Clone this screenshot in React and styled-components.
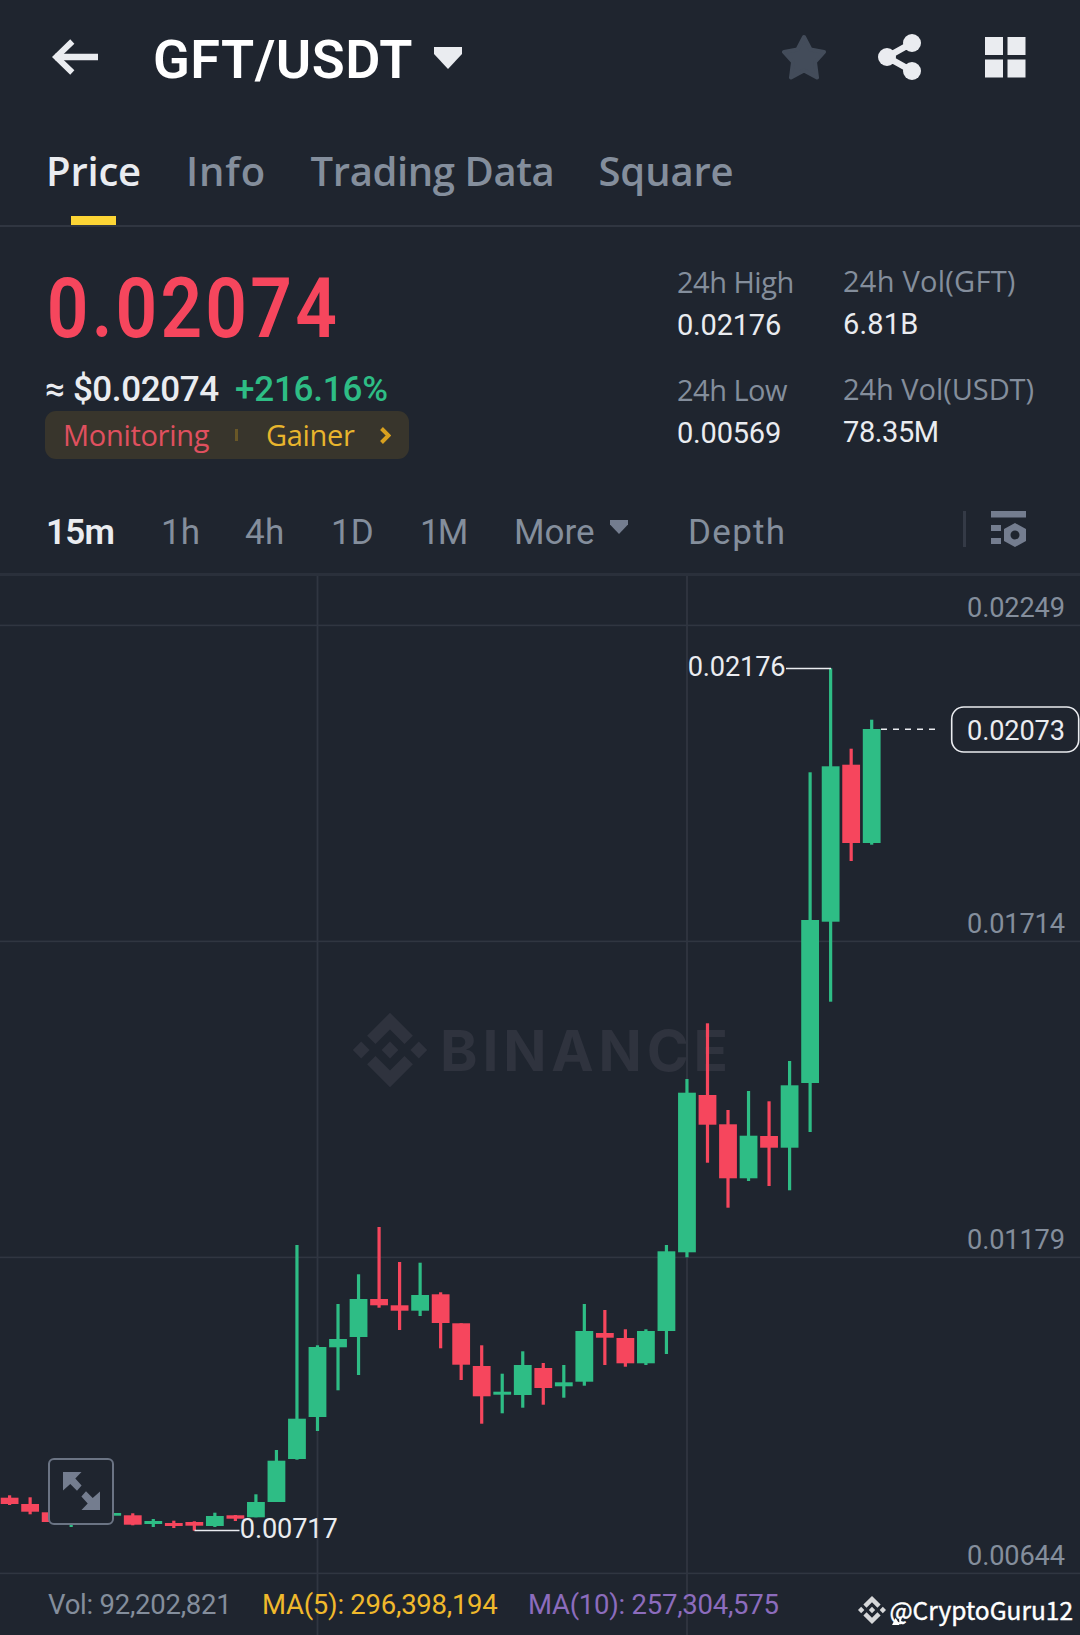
import React from "react";
import styled, { createGlobalStyle } from "styled-components";

const c = {
  bg: "#1f252f",
  line: "#303641",
  white: "#eaecf0",
  muted: "#848e9c",
  icon: "#747d8f",
  green: "#2ebd85",
  red: "#f6465d",
  gold: "#f0b92c",
  purple: "#8c6cbd",
};

const GlobalStyle = createGlobalStyle`
  body { margin: 0; background: ${c.bg}; }
  * { box-sizing: border-box; }
  svg { display: block; flex: none; }
`;

const Screen = styled.main`
  width: 1080px;
  height: 1635px;
  overflow: hidden;
  display: flex;
  flex-direction: column;
  background: ${c.bg};
  color: ${c.white};
  font-family: Roboto, "Liberation Sans", sans-serif;
  white-space: nowrap;
`;

const Header = styled.header`
  height: 114px;
  display: flex;
  align-items: center;
  padding: 0 54px 0 52px;
`;
const Pair = styled.h1`
  margin: 0 0 0 54px;
  padding-top: 5px;
  width: 265px;
  font-size: 54px;
  line-height: 64px;
  font-weight: 600;
  letter-spacing: 0.5px;
  color: #fff;
`;
const Caret = styled.svg`
  margin-left: 16px;
  margin-top: 2px;
`;
const Actions = styled.div`
  margin-left: auto;
  display: flex;
  align-items: center;
`;
const ShareSlot = styled.div`
  margin: 0 64px 0 51px;
`;

const Tabs = styled.nav`
  height: 113px;
  padding: 33px 0 0 46px;
  display: flex;
  gap: 44px;
  border-bottom: 2px solid ${c.line};
  font-family: "Open Sans", sans-serif;
`;
const Tab = styled.div`
  width: ${(p) => p.$w}px;
  display: flex;
  flex-direction: column;
  align-items: center;
  justify-content: space-between;
  font-size: 40px;
  line-height: 48px;
  font-weight: 600;
  letter-spacing: ${(p) => p.$ls}px;
  color: ${(p) => (p.$active ? c.white : c.muted)};
`;
const Indicator = styled.i`
  width: 45px;
  height: 9px;
  background: #fcd535;
`;

const Ticker = styled.section`
  height: 257px;
  padding: 40px 0 0 45px;
  display: flex;
`;
const Quote = styled.div`
  width: 632px;
`;
const LastPrice = styled.div`
  padding-left: 2px;
  font-size: 83px;
  line-height: 84px;
  font-weight: 600;
  letter-spacing: 3.6px;
  transform: scaleX(0.88);
  transform-origin: left;
  color: ${c.red};
`;
const Approx = styled.div`
  margin-top: 17px;
  display: flex;
  font-size: 35px;
  line-height: 43px;
  font-weight: 500;
`;
const Fiat = styled.span`
  width: 190px;
  letter-spacing: -0.4px;
`;
const Change = styled.span`
  color: ${c.green};
  letter-spacing: -0.2px;
`;
const Tag = styled.div`
  width: 364px;
  height: 48px;
  padding: 0 18px;
  display: flex;
  align-items: center;
  border-radius: 11px;
  background: #38352c;
  font: 400 29px/40px "Open Sans", sans-serif;
`;
const TagText = styled.span`
  width: ${(p) => p.$w}px;
  letter-spacing: -0.3px;
  color: ${(p) => p.$color};
`;
const TagDivider = styled.i`
  width: 3px;
  height: 12px;
  margin: 0 28px 0 26px;
  background: #695727;
`;

const Stats = styled.div`
  display: flex;
  margin-top: -5px;
`;
const StatColumn = styled.div`
  width: 166px;
  display: flex;
  flex-direction: column;
  gap: 25px;
  margin-top: ${(p) => (p.$raised ? -1 : 0)}px;
`;
const StatLabel = styled.div`
  font: 400 29px/40px "Open Sans", sans-serif;
  letter-spacing: ${(p) => p.$ls}px;
  color: ${c.muted};
`;
const StatValue = styled.div`
  margin-top: 3px;
  font-size: 29px;
  line-height: 40px;
  letter-spacing: ${(p) => p.$ls}px;
`;

const Periods = styled.nav`
  height: 89px;
  display: flex;
  align-items: center;
  padding-left: 46px;
  font-size: 35px;
  line-height: 44px;
`;
const Period = styled.span`
  width: ${(p) => p.$w}px;
  padding-top: 8px;
  display: flex;
  font-weight: ${(p) => (p.$active ? 600 : 400)};
  letter-spacing: ${(p) => p.$ls}px;
  color: ${(p) => (p.$active ? c.white : c.muted)};
`;
const DepthPeriod = styled(Period)`
  padding-left: 60px;
`;
const SmallCaret = styled.svg`
  margin: 9px 0 0 auto;
`;
const Separator = styled.i`
  width: 3px;
  height: 36px;
  margin-right: 25px;
  background: #343a46;
`;

const ChartPanel = styled.section`
  position: relative;
  height: 1062px;
  border-top: 3px solid #2a303b;
`;
const Expand = styled.button`
  position: absolute;
  left: 48px;
  top: 882px;
  width: 66px;
  height: 67px;
  padding: 0 0 1px 0;
  display: grid;
  place-items: center;
  border: 2px solid #6b7484;
  border-radius: 6px;
  background: ${c.bg};
`;
const Legend = styled.div`
  position: absolute;
  left: 48px;
  bottom: 13px;
  display: flex;
  font-size: 27.5px;
  line-height: 34px;
`;
const LegendItem = styled.span`
  width: ${(p) => p.$w}px;
  letter-spacing: -0.25px;
  color: ${(p) => p.$color};
`;
const Author = styled.div`
  position: absolute;
  right: 7px;
  bottom: 7px;
  display: flex;
  align-items: center;
  gap: 3px;
  color: #fff;
  font: 400 24.5px/36px "Noto Sans CJK SC", sans-serif;
  -webkit-text-stroke: 0.4px #fff;
`;
const Speck = styled.svg`
  position: absolute;
  left: 34px;
  bottom: 3px;
`;

/* direction, body top, body bottom, wick top, wick bottom (page pixels) */
const candles = [
  ["d", 1497.7, 1504, 1495.3, 1505],
  ["d", 1504, 1511.7, 1497.3, 1514.3],
  ["d", 1512.3, 1522, 1512.3, 1522],
  ["u", 1514, 1522, 1512, 1527],
  ["d", 1513, 1519, 1512, 1520],
  ["u", 1513, 1515.7, 1512.5, 1516],
  ["d", 1515.3, 1524.7, 1513.3, 1525.3],
  ["u", 1521, 1524, 1519, 1527],
  ["d", 1523, 1526, 1520.7, 1528],
  ["d", 1522, 1525.7, 1521.3, 1530.7],
  ["u", 1516, 1526, 1512.7, 1527],
  ["d", 1515.3, 1518.7, 1515, 1521],
  ["u", 1502, 1517.3, 1494.3, 1517.3],
  ["u", 1460.7, 1502, 1450, 1502],
  ["u", 1418.7, 1459, 1245, 1459.7],
  ["u", 1347, 1417, 1345.3, 1431],
  ["u", 1339, 1347.3, 1304, 1390.3],
  ["u", 1299, 1337, 1274.3, 1375],
  ["d", 1299, 1305.3, 1227, 1307.7],
  ["d", 1305.3, 1310.7, 1262, 1330],
  ["u", 1295, 1310.7, 1262.7, 1316],
  ["d", 1294.3, 1323, 1292.3, 1348.3],
  ["d", 1323.3, 1364.7, 1323.3, 1380],
  ["d", 1366, 1396.3, 1345.3, 1423.7],
  ["u", 1391.7, 1394.7, 1373.7, 1413.3],
  ["u", 1365, 1395, 1351.3, 1407.7],
  ["d", 1368, 1388, 1363, 1404.7],
  ["u", 1382.3, 1386.3, 1365, 1397.7],
  ["u", 1331, 1381.7, 1304, 1385.7],
  ["d", 1333, 1337.7, 1310, 1365],
  ["d", 1338, 1363.3, 1329.3, 1366.7],
  ["u", 1331, 1363.3, 1329.3, 1365],
  ["u", 1251.3, 1331, 1245, 1354],
  ["u", 1092.7, 1252.3, 1079, 1257.3],
  ["d", 1095, 1124.7, 1023.3, 1162.7],
  ["d", 1124.3, 1178.3, 1110, 1207.7],
  ["u", 1135.7, 1178.3, 1091, 1181],
  ["d", 1136, 1147.7, 1101.3, 1186],
  ["u", 1085.3, 1147.7, 1061, 1190.3],
  ["u", 920, 1083, 772.3, 1132],
  ["u", 766.3, 921.7, 668.3, 1001.7],
  ["d", 764.7, 843, 748.7, 861],
  ["u", 729, 843, 719.7, 844.7],
];

const levels = [
  ["0.02249", 625.4],
  ["0.01714", 941.4],
  ["0.01179", 1257.4],
  ["0.00644", 1573.4],
];

const axisText = { fontFamily: "Roboto, sans-serif", fontSize: 27.2, letterSpacing: -0.15 };

/* Five-part diamond mark on a 74.4-unit square */
function DiamondMark({ size, color, ...rest }) {
  return (
    <svg width={size} height={size} viewBox="0 0 74.4 74.4" fill={color} {...rest}>
      <path d="M37.2 0 60.1 22.9 51.7 31.3 37.2 16.8 22.7 31.3 14.3 22.9z" />
      <path d="M37.2 74.4 60.1 51.5 51.7 43.1 37.2 57.6 22.7 43.1 14.3 51.5z" />
      <path d="M8.4 28.8 16.8 37.2 8.4 45.6 0 37.2z" />
      <path d="M66 28.8 74.4 37.2 66 45.6 57.6 37.2z" />
      <path d="M37.2 28.8 45.6 37.2 37.2 45.6 28.8 37.2z" />
    </svg>
  );
}

function CandleChart() {
  return (
    <svg width="1080" height="1059" viewBox="0 576 1080 1059">
      {levels.map(([label, y]) => (
        <rect key={label} x="0" y={y - 0.8} width="1080" height="1.6" fill={c.line} />
      ))}
      <DiamondMark size={74.4} color="#2f333e" x="352.8" y="1012.8" />
      <text x="440" y="1070.6" fill="#2f333e" fontFamily="Inter, sans-serif" fontWeight="700" fontSize="56.8" textLength="288" lengthAdjust="spacing">
        BINANCE
      </text>
      <rect x="316.6" y="576" width="1.8" height="1059" fill={c.line} />
      <rect x="686.1" y="576" width="1.8" height="1059" fill={c.line} />
      {candles.map(([dir, top, bottom, high, low], i) => {
        const x = 9.6 + i * 20.526;
        return (
          <g key={i} fill={dir === "u" ? c.green : c.red}>
            <rect x={x - 1.6} y={high} width="3.2" height={low - high} />
            <rect x={x - 8.9} y={top} width="17.8" height={bottom - top} />
          </g>
        );
      })}
      {levels.map(([label, y]) => (
        <text key={label} x="967" y={y - 8.7} fill={c.muted} {...axisText}>
          {label}
        </text>
      ))}
      <g stroke={c.white} fill="none">
        <path d="M786 668.5H831" strokeWidth="1.6" />
        <path d="M194.5 1530.5H239.5" strokeWidth="1.6" />
        <path d="M881 729.3H936" strokeWidth="1.5" strokeDasharray="6 6" />
        <rect x="951.7" y="707" width="127" height="45" rx="12" strokeWidth="1.6" fill={c.bg} />
      </g>
      <g fill={c.white} {...axisText}>
        <text x="687.7" y="675.9">0.02176</text>
        <text x="239.8" y="1538">0.00717</text>
        <text x="967" y="740">0.02073</text>
      </g>
    </svg>
  );
}

const tabs = [
  ["Price", 95, -0.2, true],
  ["Info", 82, 0.9],
  ["Trading Data", 243, -0.4],
  ["Square", 136, -0.15],
];

const stats = [
  [["24h High", "0.02176", -0.5, -0.2], ["24h Low", "0.00569", -0.5, -0.2]],
  [["24h Vol(GFT)", "6.81B", 0.25, 0.2], ["24h Vol(USDT)", "78.35M", -0.05, -0.4]],
];

const periods = [
  ["15m", 115, -0.8, true],
  ["1h", 84, 0],
  ["4h", 86, 0.3],
  ["1D", 89, 0],
  ["1M", 94, -1.8],
];

export default function App() {
  return (
    <>
      <GlobalStyle />
      <Screen>
        <Header>
          <svg width="47" height="36" viewBox="0 0 47 36" fill="none" stroke={c.white}>
            <path d="M3 18H46" strokeWidth="6.5" />
            <path d="M20.3 2.5 4.2 18 20.3 33.5" strokeWidth="6" />
          </svg>
          <Pair>GFT/USDT</Pair>
          <Caret width="28" height="22" viewBox="0 0 28 22" fill={c.white}>
            <path d="M0 0H28V7L14 22 0 7z" />
          </Caret>
          <Actions>
            <svg width="46" height="46" viewBox="0 0 46 46" fill="#434c5a" stroke="#434c5a" strokeWidth="4" strokeLinejoin="round">
              <path d="M23 3 29.5 15.5 43 18 34 28 36 43.5 23 36.5 10 43.5 12 28 3 18 16.5 15.5z" />
            </svg>
            <ShareSlot>
              <svg width="43" height="46" viewBox="0 0 43 46" fill={c.white}>
                <path d="M34 9 9 23 34 37" fill="none" stroke={c.white} strokeWidth="6.5" />
                <circle cx="9" cy="23" r="9" />
                <circle cx="34" cy="9" r="9" />
                <circle cx="34" cy="37" r="9" />
              </svg>
            </ShareSlot>
            <svg width="41" height="41" viewBox="0 0 41 41" fill={c.white}>
              <path d="M0 0H18V18H0zM22.5 0H40.5V18H22.5zM0 22.5H18V40.5H0zM22.5 22.5H40.5V40.5H22.5z" />
            </svg>
          </Actions>
        </Header>

        <Tabs>
          {tabs.map(([label, w, ls, active]) => (
            <Tab key={label} $w={w} $ls={ls} $active={active}>
              {label}
              {active && <Indicator />}
            </Tab>
          ))}
        </Tabs>

        <Ticker>
          <Quote>
            <LastPrice>0.02074</LastPrice>
            <Approx>
              <Fiat>≈ $0.02074</Fiat>
              <Change>+216.16%</Change>
            </Approx>
            <Tag>
              <TagText $w={146} $color="#e0505f">Monitoring</TagText>
              <TagDivider />
              <TagText $w={114} $color="#e9b52d">Gainer</TagText>
              <svg width="11" height="17" viewBox="0 0 11 17" fill="none" stroke="#d8a01f" strokeWidth="4">
                <path d="M1.5 1.5 8.5 8.5 1.5 15.5" />
              </svg>
            </Tag>
          </Quote>
          <Stats>
            {stats.map((column, i) => (
              <StatColumn key={i} $raised={i === 1}>
                {column.map(([label, value, labelLs, valueLs]) => (
                  <div key={label}>
                    <StatLabel $ls={labelLs}>{label}</StatLabel>
                    <StatValue $ls={valueLs}>{value}</StatValue>
                  </div>
                ))}
              </StatColumn>
            ))}
          </Stats>
        </Ticker>

        <Periods>
          {periods.map(([label, w, ls, active]) => (
            <Period key={label} $w={w} $ls={ls} $active={active}>
              {label}
            </Period>
          ))}
          <Period $w={114} $ls={0}>
            More
            <SmallCaret width="18" height="14" viewBox="0 0 18 14" fill={c.icon}>
              <path d="M0 0H18V4.5L9 14 0 4.5z" />
            </SmallCaret>
          </Period>
          <DepthPeriod $w={335} $ls={1.3}>Depth</DepthPeriod>
          <Separator />
          <svg width="35" height="36" viewBox="0 0 35 36" fill={c.icon}>
            <path d="M0 0H35V6.5H0zM0 14H10V20H0zM0 27H10V33H0z" />
            <path fillRule="evenodd" d="M24 12 35 18V30L24 36 13 30V18zM24 19.5a4.5 4.5 0 1 0 0 9 4.5 4.5 0 0 0 0-9z" />
          </svg>
        </Periods>

        <ChartPanel>
          <CandleChart />
          <Expand>
            <svg width="37" height="38" viewBox="0 0 37 38" fill={c.icon}>
              <path d="M0 0H18.5L12.3 6.4 18.6 13.6 14 18.8 7.3 12 0 18.6z" />
              <path d="M37 38H18.5L24.7 31.6 18.4 24.4 23 19.2 29.7 26 37 19.4z" />
            </svg>
          </Expand>
          <Legend>
            <LegendItem $w={214} $color={c.muted}>Vol: 92,202,821</LegendItem>
            <LegendItem $w={266} $color={c.gold}>MA(5): 296,398,194</LegendItem>
            <LegendItem $w={260} $color={c.purple}>MA(10): 257,304,575</LegendItem>
          </Legend>
          <Author>
            <DiamondMark size={28} color="#d6d7d9" />
            @CryptoGuru12
            <Speck width="14" height="8" viewBox="0 0 14 8" fill="#fff">
              <path d="M0 8 3.5 1 5 3 7.5 8zM7 2 10 0 9 4 14 5.5 11 7.5 7.5 6z" />
            </Speck>
          </Author>
        </ChartPanel>
      </Screen>
    </>
  );
}
